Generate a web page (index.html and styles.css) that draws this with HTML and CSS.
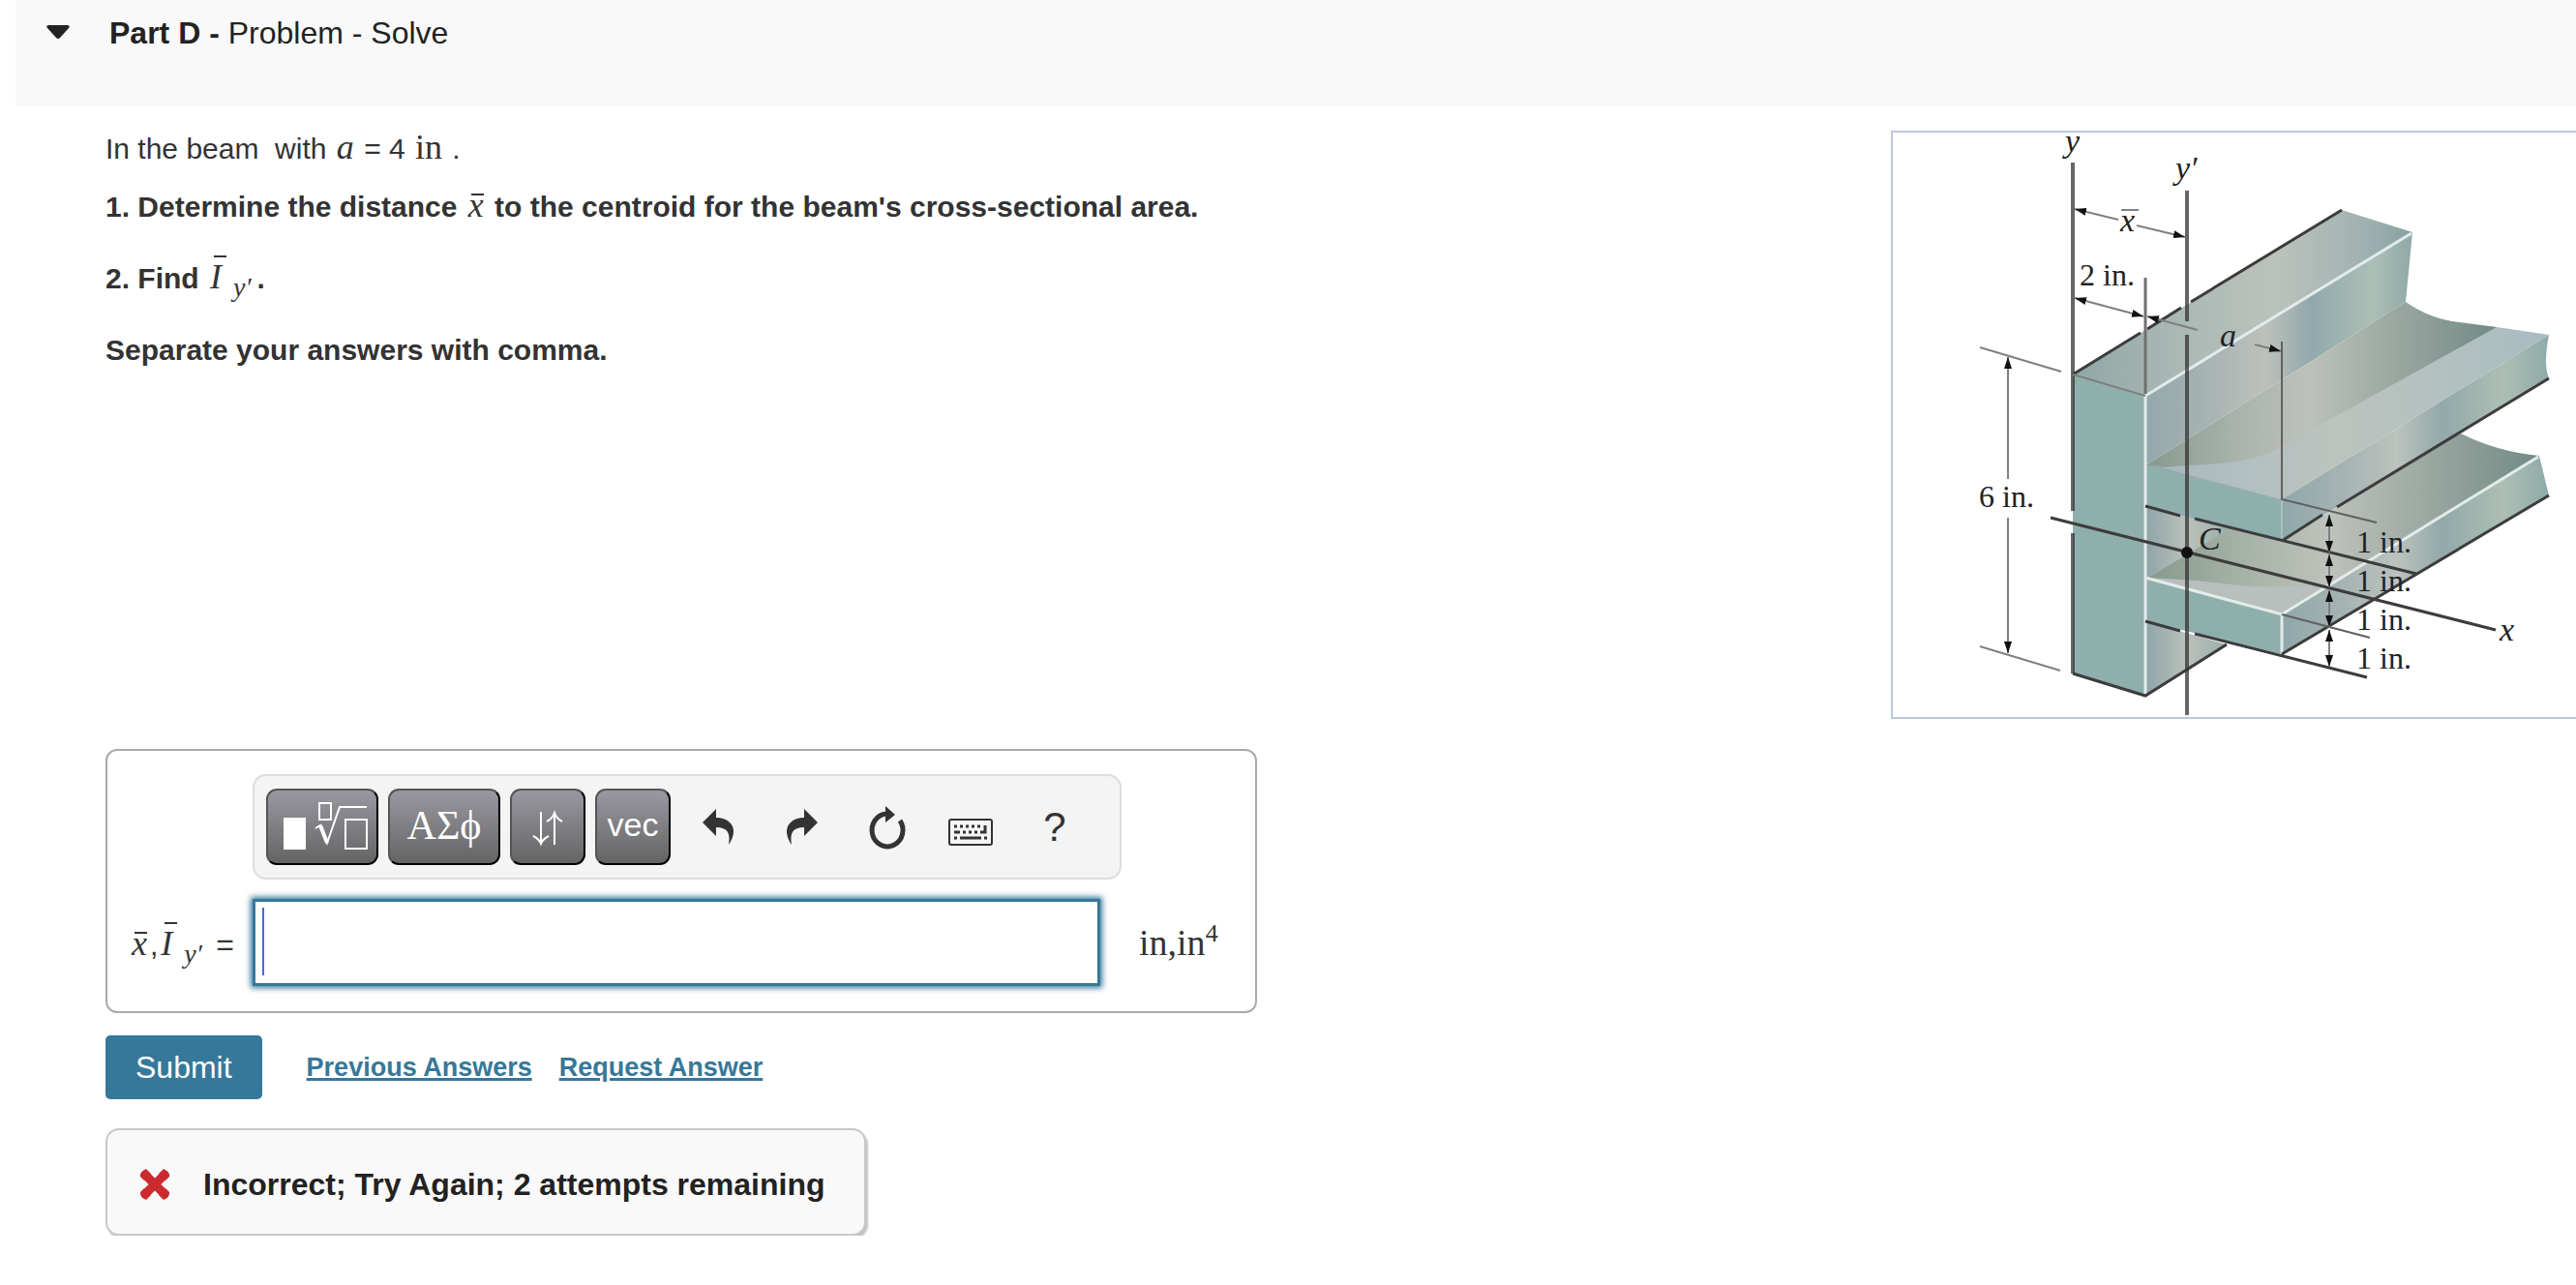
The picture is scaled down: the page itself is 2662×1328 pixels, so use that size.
FILE: index.html
```html
<!DOCTYPE html>
<html lang="en">
<head>
    <meta charset="UTF-8">
    <title>Part D - Problem - Solve</title>
    <link rel="stylesheet" href="styles.css">
</head>
<body>
    <header class="part-head">
        <button class="toggle" type="button" aria-label="Collapse part">
            <svg width="24" height="14" viewBox="0 0 24 14"><path d="M2 0H22Q25 1 23 3L14 13Q12 15 10 13L1 3Q-1 1 2 0Z" fill="#222"/></svg>
        </button>
        <h2><b>Part D - </b>Problem - Solve</h2>
    </header>
    <main>
        <section class="problem">
            <div class="question">
                <p class="intro">In the beam &nbsp;with <i class="math">a</i> = 4 <span class="math">in</span> .</p>
                <p><b>1. Determine the distance <i class="math bar">x</i> to the centroid for the beam's cross-sectional area.</b></p>
                <p><b>2. Find <i class="math bar tall">I</i><i class="math low">y′</i>.</b></p>
                <p><b>Separate your answers with comma.</b></p>
            </div>
            <div class="figure">
                <svg width="706" height="604" viewBox="0 0 706 604">
                    <defs>
                        <linearGradient id="top" gradientUnits="userSpaceOnUse" x1="186" y1="0" x2="536" y2="0">
                            <stop offset="0" stop-color="#8fa6a6"/><stop offset=".3" stop-color="#a9b8b4"/><stop offset=".6" stop-color="#bcc2bc"/><stop offset=".85" stop-color="#a2b2b2"/><stop offset="1" stop-color="#86a3a1"/>
                        </linearGradient>
                        <linearGradient id="web" gradientUnits="userSpaceOnUse" x1="261" y1="0" x2="537" y2="0">
                            <stop offset="0" stop-color="#92a8ab"/><stop offset=".25" stop-color="#a9b3b3"/><stop offset=".45" stop-color="#bdc1bb"/><stop offset=".62" stop-color="#91a9ac"/><stop offset=".85" stop-color="#acbfb5"/><stop offset="1" stop-color="#8fa9a8"/>
                        </linearGradient>
                        <linearGradient id="valley" gradientUnits="userSpaceOnUse" x1="265" y1="0" x2="624" y2="0">
                            <stop offset="0" stop-color="#879a8e"/><stop offset=".25" stop-color="#a9b3ab"/><stop offset=".46" stop-color="#bdc1bb"/><stop offset=".75" stop-color="#95a39d"/><stop offset="1" stop-color="#718a84"/>
                        </linearGradient>
                        <linearGradient id="light" gradientUnits="userSpaceOnUse" x1="279" y1="0" x2="678" y2="0">
                            <stop offset="0" stop-color="#a8b8bf"/><stop offset=".2" stop-color="#b2bfc1"/><stop offset=".45" stop-color="#bdc3be"/><stop offset=".8" stop-color="#b0c0c0"/><stop offset="1" stop-color="#a7bbbf"/>
                        </linearGradient>
                        <linearGradient id="side" gradientUnits="userSpaceOnUse" x1="402" y1="0" x2="678" y2="0">
                            <stop offset="0" stop-color="#8fa8aa"/><stop offset=".25" stop-color="#a8b4b4"/><stop offset=".43" stop-color="#bcc2bd"/><stop offset=".6" stop-color="#92a9aa"/><stop offset=".83" stop-color="#adbfb4"/><stop offset="1" stop-color="#8eaaa8"/>
                        </linearGradient>
                        <linearGradient id="low" gradientUnits="userSpaceOnUse" x1="265" y1="0" x2="668" y2="0">
                            <stop offset="0" stop-color="#879a8e"/><stop offset=".25" stop-color="#a7b3a9"/><stop offset=".46" stop-color="#bec2bb"/><stop offset=".75" stop-color="#96a49e"/><stop offset="1" stop-color="#718a84"/>
                        </linearGradient>
                        <linearGradient id="under" gradientUnits="userSpaceOnUse" x1="261" y1="0" x2="345" y2="0">
                            <stop offset="0" stop-color="#8da4a7"/><stop offset=".5" stop-color="#bcc0bb"/><stop offset="1" stop-color="#9cb0aa"/>
                        </linearGradient>
                        <marker id="arrow" viewBox="0 0 12 8" refX="12" refY="4" markerWidth="12" markerHeight="8" markerUnits="userSpaceOnUse" orient="auto-start-reverse">
                            <path d="M0 0L12 4L0 8Z" fill="#111"/>
                        </marker>
                    </defs>
                    <!-- web -->
                    <path d="M261 272L537 103L530 175L261 344Z" fill="url(#web)"/>
                    <path d="M186 250L464 80L537 103L261 272Z" fill="url(#top)"/>
                    <path d="M261 505L345 529L261 582Z" fill="url(#under)"/>
                    <!-- lower flange -->
                    <path d="M261 386L402 422L587 311Q625 330 668 334L402 498L261 460Z" fill="url(#low)"/>
                    <path d="M261 386L350 408L261 462Z" fill="url(#under)"/>
                    <path d="M261 460L402 498L449 467Q390 472 350 467T261 460Z" fill="#b8bfbd"/>
                    <path d="M402 498L668 334L678 375L402 539Z" fill="url(#side)"/>
                    <path d="M261 460L402 498V539L261 505Z" fill="#8fafad"/>
                    <!-- upper flange -->
                    <path d="M261 344L530 175Q556 193 585 196L624 201L402 379Z" fill="url(#valley)"/>
                    <path d="M264 343L279 346C330 341 360 345 395 328L624 201L678 209L402 379Z" fill="url(#light)"/>
                    <path d="M402 379L678 209Q672 240 678 254L402 422Z" fill="url(#side)"/>
                    <path d="M261 343L402 379V422L261 386Z" fill="#8fafad"/>
                    <path d="M186 250L261 272V582L186 559Z" fill="#8fafad"/>
                    <!-- bright edges -->
                    <path d="M261 582V272L536 104M261 460L402 498L667 335M402 498V539" fill="none" stroke="#e3ebeb" stroke-width="3"/>
                    <path d="M402 379V422" stroke="#a9c0bf" stroke-width="2"/>
                    <!-- dark edges -->
                    <path d="M186 250L256 207M263 203L298 181M308 175L464 80M186 559L261 582L345 529M261 386L297 396M312 399L541 456M402 422L444 395M459 387L678 254M261 505L297 515M312 518L490 563M402 539L678 375" fill="none" stroke="#3c3c3c" stroke-width="3"/>
                    <!-- axes -->
                    <path d="M186 31V391M186 414V559M304 60V195M304 209V602" stroke="#333" stroke-width="4" opacity=".75"/>
                    <path d="M163 398L623 514" stroke="#3c3c3c" stroke-width="3"/>
                    <circle cx="304" cy="434" r="6" fill="#111"/>
                    <!-- dimension lines -->
                    <g fill="none" stroke="#808080" stroke-width="2">
                        <path d="M90 222L174 247M90 531L173 556M186 250L261 272"/>
                        <path d="M261 150V270" stroke="#707070" stroke-width="3"/>
                        <path d="M402 216V379L500 403M402 498L493 522" stroke="#606060"/>
                        <path d="M119 358V232" marker-end="url(#arrow)"/>
                        <path d="M119 398V538" marker-end="url(#arrow)"/>
                        <path d="M233 90L188 79" marker-end="url(#arrow)"/>
                        <path d="M252 96L302 108" marker-end="url(#arrow)"/>
                        <path d="M188 171L259 190" marker-start="url(#arrow)" marker-end="url(#arrow)"/>
                        <path d="M315 204L263 190" marker-end="url(#arrow)"/>
                        <path d="M374 219L401 226" marker-end="url(#arrow)"/>
                        <path d="M451 395V434" marker-start="url(#arrow)" marker-end="url(#arrow)"/>
                        <path d="M451 436V470" marker-start="url(#arrow)" marker-end="url(#arrow)"/>
                        <path d="M451 473V511" marker-start="url(#arrow)" marker-end="url(#arrow)"/>
                        <path d="M451 514V552" marker-start="url(#arrow)" marker-end="url(#arrow)"/>
                        <path d="M236 80H254"/>
                    </g>
                    <g class="labels">
                        <text x="193" y="158">2 in.</text>
                        <text x="89" y="387">6 in.</text>
                        <text x="479" y="434">1 in.</text>
                        <text x="479" y="474">1 in.</text>
                        <text x="479" y="514">1 in.</text>
                        <text x="479" y="554">1 in.</text>
                        <g class="var">
                            <text x="178" y="20">y</text>
                            <text x="292" y="48">y′</text>
                            <text x="235" y="102">x</text>
                            <text x="338" y="221">a</text>
                            <text x="316" y="431">C</text>
                            <text x="627" y="525">x</text>
                        </g>
                    </g>
                </svg>
            </div>
        </section>
        <form>
            <div class="answer-box">
                <div class="toolbar">
                    <button class="key wide" type="button" aria-label="Templates">
                        <svg width="112" height="75" viewBox="2 2 112 75" fill="none" stroke="#fff" stroke-width="2">
                            <path d="M18 30H41V63H18Z" fill="#fff" stroke="none"/>
                            <path d="M55 15H67V32H55ZM82 32H104V62H82Z"/>
                            <path d="M51 41L56 38L63 56L76 19H104"/>
                            <path d="M56 38L63 56" stroke-width="4"/>
                        </svg>
                    </button>
                    <button class="key wide greek" type="button">ΑΣϕ</button>
                    <button class="key" type="button" aria-label="Arrows">
                        <svg width="74" height="75" viewBox="2 2 74 75" fill="none" stroke="#fff" stroke-width="2">
                            <path d="M32 24V56M24 49Q30 52 32 57Q34 52 40 49M46 58V26M38 34Q44 31 46 25Q48 31 54 34"/>
                        </svg>
                    </button>
                    <button class="key" type="button">vec</button>
                    <div class="tools">
                        <button type="button" aria-label="Undo">
                            <svg width="32" height="37" viewBox="0 0 32 37"><path d="M0 14L14 0V9C26 9 32 16 32 23C32 29 29 34 27 37C29 25 26 19 14 19V28Z" fill="#333"/></svg>
                        </button>
                        <button type="button" aria-label="Redo">
                            <svg width="32" height="37" viewBox="0 0 32 37"><path d="M32 14L18 0V9C6 9 0 16 0 23C0 29 3 34 5 37C3 25 6 19 18 19V28Z" fill="#333"/></svg>
                        </button>
                        <button type="button" aria-label="Reset">
                            <svg width="38" height="44" viewBox="0 0 38 44"><path d="M19 8A16 17 0 1 0 33 15" fill="none" stroke="#333" stroke-width="5"/><path d="M18 0L28 9L18 17Z" fill="#333"/></svg>
                        </button>
                        <button type="button" aria-label="Keyboard">
                            <svg class="keyboard" width="46" height="28" viewBox="0 0 46 28"><rect x="1" y="1" width="44" height="26" rx="2" fill="none" stroke="#333" stroke-width="2"/><path d="M6 8H9M12 8H15M18 8H21M24 8H27M30 8H33M6 14H12M15 14H18M21 14H24M27 14H30M33 14H38V7M6 20H9M12 20H34M37 20H40" stroke="#333" stroke-width="3" fill="none"/></svg>
                        </button>
                        <button class="help" type="button">?</button>
                    </div>
                </div>
                <div class="field">
                    <label for="answer"><i class="math bar">x</i>,<i class="math bar tall">I</i><i class="math low">y′</i> <span class="eq">=</span></label>
                    <input id="answer" type="text">
                    <span class="units">in,in<span class="power">4</span></span>
                </div>
            </div>
            <div class="actions">
                <button class="submit" type="submit">Submit</button>
                <a href="#">Previous Answers</a>
                <a href="#">Request Answer</a>
            </div>
        </form>
        <div class="feedback">
            <svg width="32" height="32" viewBox="0 0 32 32"><path d="M5 5L27 27M27 5L5 27" stroke="#cb2a2f" stroke-width="9"/><path d="M1 8Q0 3 7 0L12 5L5 12ZM25 0Q32 3 31 8L27 12L20 5ZM5 20L12 27L7 32Q0 29 1 24ZM27 20L31 24Q32 29 25 32L20 27Z" fill="#cb2a2f"/></svg>
            <b>Incorrect; Try Again; 2 attempts remaining</b>
        </div>
    </main>
</body>
</html>
```
FILE: styles.css
```css
body,h2,p{ margin: 0;}
body{
    font-family: "Liberation Sans", Arial, sans-serif;
    font-size: 30px;
    line-height: 36px;
    color: #333;
    background-color: #fff;
}
button,input{
    box-sizing: border-box;
    padding: 0;
    font-family: inherit;
    cursor: pointer;
}
svg{
    display: block;
    overflow: visible;
}
.part-head{
    display: flex;
    align-items: flex-start;
    gap: 41px;
    box-sizing: border-box;
    height: 110px;
    margin-left: 16px;
    padding: 16px 32px;
    background-color: #f9f9f9;
}
.toggle{
    padding-top: 10px;
    border: 0;
    background: none;
}
.part-head h2{
    font-size: 32px;
    font-weight: normal;
    color: #222;
}
main{
    padding: 25px 0 0 109px;
}
/* question and figure */
.problem{
    display: flex;
    justify-content: space-between;
    margin-bottom: 31px;
}
.question{
    padding-top: 1px;
}
.question p{
    margin-bottom: 38px;
}
.question .intro{
    margin-bottom: 24px;
}
.math{
    margin: 0 2px;
    font-family: "Liberation Serif", "Times New Roman", serif;
    font-size: 36px;
    font-weight: normal;
    line-height: 0;
}
.bar{
    position: relative;
    margin: 0 3px;
}
.bar:before{
    content: "";
    position: absolute;
    right: 0;
    top: -2px;
    width: 13px;
    height: 2px;
    margin-top: 10px;
    background-color: #333;
}
.tall{
    margin-right: 12px;
}
.tall:before{
    right: -5px;
    margin-top: 0;
}
.low{
    position: relative;
    top: 8px;
    margin: 0 6px 0 0;
    font-size: 28px;
}
.figure{
    flex: none;
    border: 2px solid #b9c9dc;
    border-right: 0;
}
.labels{
    font-family: "Liberation Serif", "Times New Roman", serif;
    font-size: 32px;
    fill: #222;
}
.var{
    font-size: 34px;
    font-style: italic;
}
/* answer box */
.answer-box{
    box-sizing: border-box;
    max-width: 1190px;
    padding: 24px 0 26px;
    border: 2px solid #aaa;
    border-radius: 12px;
}
.toolbar{
    display: flex;
    align-items: center;
    gap: 10px;
    box-sizing: border-box;
    max-width: 898px;
    height: 109px;
    margin: 0 0 20px 150px;
    padding: 0 12px;
    border: 2px solid #ddd;
    border-radius: 14px;
    background-color: #f4f4f4;
}
.key{
    width: 78px;
    height: 79px;
    padding-bottom: 4px;
    border: 2px solid;
    border-color: #555 #000 #000 #555;
    border-radius: 11px;
    background: linear-gradient(#9a98a1, #646464);
    color: #fff;
    font-size: 34px;
}
.key svg{
    margin-bottom: -4px;
}
.wide{
    width: 116px;
}
.greek{
    font-family: "Liberation Serif", "DejaVu Serif", serif;
    font-size: 42px;
}
.tools{
    display: flex;
    align-items: center;
    gap: 21px;
    padding-left: 6px;
}
.tools button{
    display: flex;
    align-items: center;
    justify-content: center;
    width: 66px;
    height: 79px;
    border: 0;
    background: none;
    color: #333;
}
.keyboard{
    padding-top: 10px;
}
.tools .help{
    font-size: 42px;
}
.field{
    display: flex;
    align-items: center;
}
.field label{
    box-sizing: border-box;
    width: 150px;
    padding: 4px 0 0 22px;
    white-space: nowrap;
}
.eq{
    font-size: 32px;
}
.field input{
    flex: 0 1 876px;
    height: 90px;
    padding: 0 10px;
    border: 3px solid #36789a;
    outline: 0;
    /* insertion bar */
    background: linear-gradient(#4169e1, #4169e1) no-repeat 7px 6px / 2px 70px;
    box-shadow: 0 0 6px 2px #36789a;
    font-size: 36px;
}
.units{
    padding: 4px 0 0 40px;
    font-family: "Liberation Serif", "Times New Roman", serif;
    font-size: 38px;
}
.power{
    position: relative;
    top: -14px;
    font-size: 26px;
}
/* buttons under the box */
.actions{
    display: flex;
    align-items: center;
    gap: 28px;
    margin: 23px 0 30px;
}
.submit{
    height: 66px;
    margin-right: 18px;
    padding: 0 31px;
    border: 0;
    border-radius: 5px;
    background-color: #36789a;
    color: #fff;
    font-size: 32px;
}
.actions a{
    font-size: 27px;
    font-weight: bold;
    color: #36789a;
    text-decoration-thickness: 3px;
}
.feedback{
    display: flex;
    align-items: center;
    gap: 34px;
    box-sizing: border-box;
    width: fit-content;
    height: 111px;
    padding: 4px 40px 0 33px;
    border: 2px solid #c8c8c8;
    border-radius: 14px;
    background-color: #f9f9f9;
    box-shadow: 2px 3px 2px #c4c4c4;
    color: #222;
    font-size: 32px;
}
```
